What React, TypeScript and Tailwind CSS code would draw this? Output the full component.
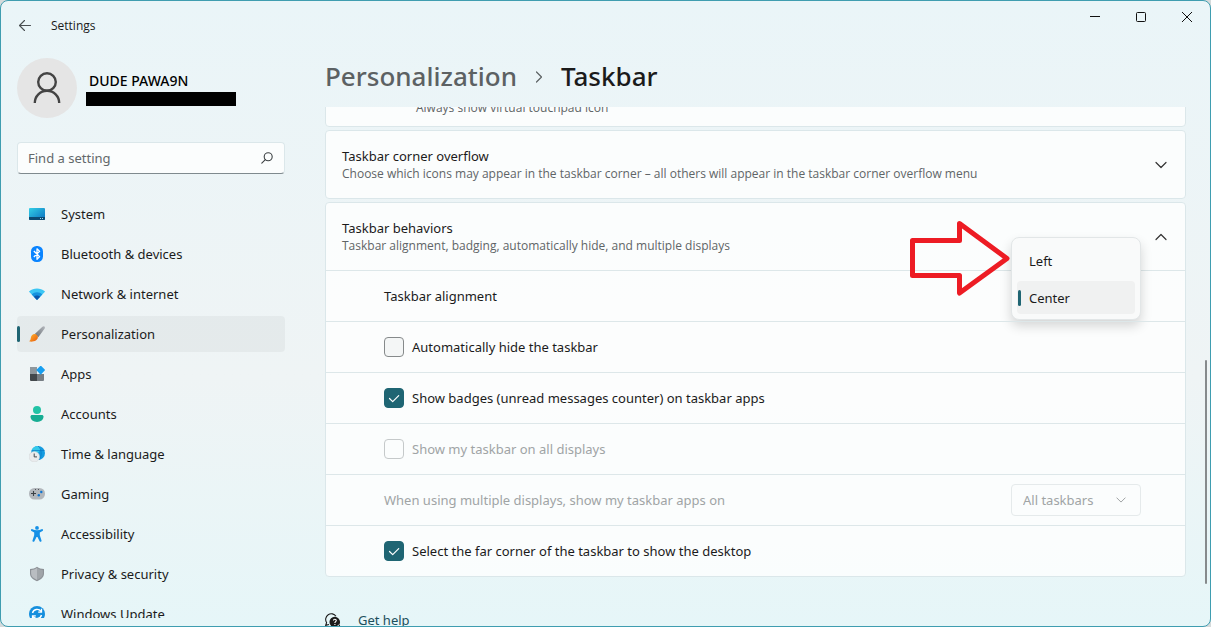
import React, { useState } from "react";

type IconProps = { className?: string };

const SystemIcon = () => (
  <svg viewBox="0 0 16 16" className="size-4">
    <defs>
      <linearGradient id="system" x1="0" y1="0" x2="1" y2="1">
        <stop offset="0" stopColor="#33cfe6" />
        <stop offset="1" stopColor="#0a6fc0" />
      </linearGradient>
    </defs>
    <rect x="0" y="2" width="16" height="12" rx="1" fill="url(#system)" />
    <path d="M0 11h16v2a1 1 0 0 1-1 1H1a1 1 0 0 1-1-1z" fill="#0c4a73" />
    <path d="M11 12h1v1h-1zM13 12h1v1h-1z" fill="#9adcf5" />
  </svg>
);

const BluetoothIcon = () => (
  <svg viewBox="0 0 16 16" className="size-4">
    <rect x="2" y="0" width="12" height="16" rx="5.500" fill="#0a84ff" />
    <path d="M4.800 5l5.800 5.600L8 13.200V2.800l2.600 2.600L4.800 11" fill="none" stroke="#fff" strokeWidth="1.300" strokeLinejoin="round" />
  </svg>
);

const NetworkIcon = () => (
  <svg viewBox="0 0 16 16" className="size-4">
    <path d="M8 14L.3 6.100a.6.6 0 0 1 0-.9C4.600 1.500 11.400 1.500 15.700 5.200a.6.6 0 0 1 0 .9z" fill="#3cc6f4" />
    <path d="M8 14L2.700 8.500C5.600 5.600 10.400 5.600 13.300 8.500z" fill="#1592de" />
    <path d="M8 14L4.900 10.800C6.600 9 9.400 9 11.100 10.800z" fill="#0b57ad" />
  </svg>
);

const BrushIcon = () => (
  <svg viewBox="0 0 16 16" className="size-4">
    <defs>
      <linearGradient id="handle" x1="1" y1="0" x2="0" y2="1">
        <stop offset="0" stopColor="#b4b8bd" />
        <stop offset="1" stopColor="#6a6f75" />
      </linearGradient>
      <linearGradient id="bristle" x1="0" y1="0" x2="1" y2="1">
        <stop offset="0" stopColor="#ffb52e" />
        <stop offset="1" stopColor="#e8590c" />
      </linearGradient>
    </defs>
    <path d="M15.400.4c.7.500.7 1.500.1 2.400L9.300 11.200 5.800 8 13.400.8c.6-.6 1.400-.8 2-.4z" fill="url(#handle)" />
    <path d="M5.600 8c1.800 0 3.400 1.500 3.300 3.300C8.700 14.400 5.200 16 .8 15.600c-.4 0-.5-.5-.2-.8 1-.8 1-1.700 1.300-3.300C2.300 9.300 3.800 8 5.600 8z" fill="url(#bristle)" />
  </svg>
);

const AppsIcon = () => (
  <svg viewBox="0 0 16 16" className="size-4">
    <path d="M1 1h7v7H1z" fill="#8f979d" />
    <path d="M1 8h7v7H2a1 1 0 0 1-1-1z" fill="#43484c" />
    <path d="M8 8h7v6a1 1 0 0 1-1 1H8z" fill="#777e84" />
    <rect x="8.500" y=".9" width="6.400" height="6.400" rx=".7" transform="rotate(45 11.700 4.100)" fill="#189ff0" />
  </svg>
);

const AccountsIcon = () => (
  <svg viewBox="0 0 16 16" className="size-4">
    <circle cx="8" cy="4" r="4" fill="#22c3a6" />
    <path d="M3.200 9h9.600c1 0 1.700.7 1.700 1.600C14.500 14 11.600 16 8 16s-6.500-2-6.500-5.400C1.500 9.700 2.200 9 3.200 9z" fill="#17ad93" />
  </svg>
);

const TimeIcon = () => (
  <svg viewBox="0 0 16 16" className="size-4">
    <circle cx="9" cy="7" r="7" fill="#149be0" />
    <path d="M9 0a7 7 0 0 0-6.600 4.700L9 7zM9 0l3 3-3 4z" fill="#35c9ea" />
    <path d="M9 0c4 3 4 10 1 14M3 4.500h12.500" stroke="#0878c4" strokeWidth=".7" fill="none" />
    <circle cx="5.300" cy="10.700" r="5.300" fill="#e9ebed" stroke="#c9cdd0" strokeWidth=".4" />
    <path d="M5.200 7.500v3.400H8" stroke="#444a4f" strokeWidth="1" fill="none" />
  </svg>
);

const GamingIcon = () => (
  <svg viewBox="0 0 16 16" className="size-4">
    <rect x="0" y="2" width="16" height="11.500" rx="5.500" fill="#b2b7bc" />
    <path d="M4.500 5v5M2 7.500h5" stroke="#3b4045" strokeWidth="1.100" />
    <path d="M6 3.500h1M9 3.500h1" stroke="#50565b" strokeWidth="1" />
    <circle cx="12.300" cy="6" r="1.200" fill="#0f75d0" />
    <circle cx="9.800" cy="9.200" r="1.200" fill="#0f75d0" />
  </svg>
);

const AccessibilityIcon = () => (
  <svg viewBox="0 0 16 16" className="size-4">
    <circle cx="8" cy="1.900" r="1.900" fill="#1590e6" />
    <path
      d="M2 3.700c.2-.6.800-.8 1.400-.500 2.900 1.500 6.300 1.500 9.200 0 .6-.3 1.200-.100 1.400.500.2.500 0 1-.500 1.300L10.800 6.600v2.600l1.700 5.300c.2.600-.1 1.100-.6 1.300-.6.2-1.100-.1-1.300-.6L8.500 11h-1l-2.100 4.200c-.2.500-.7.800-1.300.600-.5-.2-.8-.7-.6-1.300l1.700-5.300V6.600L2.500 5C2 4.700 1.800 4.200 2 3.700z"
      fill="#1590e6"
    />
  </svg>
);

const ShieldIcon = () => (
  <svg viewBox="0 0 16 16" className="size-4">
    <path d="M8 .8c2 1.500 4.300 2.200 7 2.300v4.500c0 3.600-2.700 6-7 7.600-4.300-1.600-7-4-7-7.600V3.100C3.700 3 6 2.300 8 .8z" fill="#8d9297" />
    <path d="M8 2.100v11.800c-3.800-1.500-5.900-3.400-5.900-6.300V4.200C4.300 4 6.300 3.300 8 2.100z" fill="#b9bdc1" />
    <path d="M8 2.100c1.700 1.200 3.700 1.900 5.900 2.100v3.400c0 2.900-2.100 4.800-5.900 6.300z" fill="#a0a5a9" />
  </svg>
);

const UpdateIcon = () => (
  <svg viewBox="0 0 16 16" className="size-4">
    <circle cx="8" cy="8" r="8" fill="#158fdd" />
    <path d="M3.500 7A4.700 4.700 0 0 1 12 5.500M12.500 9A4.700 4.700 0 0 1 4 10.500" stroke="#fff" strokeWidth="1.400" fill="none" />
    <path d="M12.500 2.800v3.400H9.200M3.500 13.200V9.800h3.300" stroke="#fff" strokeWidth="1.300" fill="none" />
  </svg>
);

const ChevronIcon = ({ className }: IconProps) => (
  <svg viewBox="0 0 12 12" className={className} fill="none" stroke="currentColor" strokeWidth="1.200" strokeLinecap="round" strokeLinejoin="round">
    <path d="M1 3.500l5 5 5-5" />
  </svg>
);

const GetHelpIcon = () => (
  <svg viewBox="0 0 16 16" className="size-4">
    <path d="M4 12.500l-3.300.900.900-2.900A5.300 5.300 0 1 1 11 4.300" fill="none" stroke="#1b1b1b" strokeWidth="1.100" />
    <path d="M9.800 4.800a5.300 5.300 0 1 1-.1 10.600 5.300 5.300 0 0 1 .1-10.600zM12 14l3.600 1.600L14.500 12z" fill="#1b1b1b" />
    <path d="M8.400 8.600c0-1.900 2.900-1.900 2.900 0 0 1.100-1.400 1.100-1.400 2.300M9.900 12v1" fill="none" stroke="#fff" strokeWidth="1.100" />
  </svg>
);

const navItems = [
  { label: "System", icon: SystemIcon },
  { label: "Bluetooth & devices", icon: BluetoothIcon },
  { label: "Network & internet", icon: NetworkIcon },
  { label: "Personalization", icon: BrushIcon },
  { label: "Apps", icon: AppsIcon },
  { label: "Accounts", icon: AccountsIcon },
  { label: "Time & language", icon: TimeIcon },
  { label: "Gaming", icon: GamingIcon },
  { label: "Accessibility", icon: AccessibilityIcon },
  { label: "Privacy & security", icon: ShieldIcon },
  { label: "Windows Update", icon: UpdateIcon },
];

const TitleBar = () => (
  <header className="flex h-[49px] shrink-0 items-start justify-between">
    <div className="flex h-full items-center gap-[18px] pl-4">
      <button aria-label="Back" className="text-[#4a4f52]">
        <svg viewBox="0 0 16 16" className="size-4" fill="none" stroke="currentColor" strokeWidth="1.100" strokeLinecap="round" strokeLinejoin="round">
          <path d="M13.500 7.500H2.500M7.500 2.500l-5 5 5 5" />
        </svg>
      </button>
      <span className="font-['Open_Sans',sans-serif] text-xs">Settings</span>
    </div>
    <div className="flex">
      <button aria-label="Minimize" className="flex h-8 w-[46px] items-center justify-center">
        <svg viewBox="0 0 10 10" className="size-[10px]" stroke="#111" fill="none">
          <path d="M0 4.500h10" />
        </svg>
      </button>
      <button aria-label="Maximize" className="flex h-8 w-[46px] items-center justify-center">
        <svg viewBox="0 0 10 10" className="size-[10px]" stroke="#111" fill="none">
          <rect x=".5" y=".5" width="9" height="9" rx="1" />
        </svg>
      </button>
      <button aria-label="Close" className="flex h-8 w-[46px] items-center justify-center">
        <svg viewBox="0 0 10 10" className="size-[10px]" stroke="#111" fill="none">
          <path d="M0 0l10 10M10 0L0 10" />
        </svg>
      </button>
    </div>
  </header>
);

const Sidebar = () => (
  <aside className="flex w-[284px] shrink-0 flex-col pt-2 pb-2 pl-4">
    <div className="flex items-center gap-[9px]">
      <div className="flex size-[60px] items-center justify-center rounded-full bg-[#e5e5e5]">
        <svg viewBox="0 0 28 32" className="h-8 w-7" fill="none" stroke="#444" strokeWidth="2.400">
          <circle cx="14" cy="10" r="8.800" />
          <path d="M1.800 31c0-7 5.400-12.200 12.200-12.200S26.200 24 26.200 31" />
        </svg>
      </div>
      <div>
        <p className="pl-[3px] text-sm font-medium text-black">DUDE PAWA9N</p>
        <div className="mt-px h-[14px] w-[150px] bg-black" />
      </div>
    </div>

    <div className="relative mt-6">
      <input
        type="text"
        aria-label="Find a setting"
        placeholder="Find a setting"
        className="block h-8 w-full rounded border border-[#dbe7ea] border-b-[#7f8a8e] bg-white/80 pr-9 pl-[10px] text-[13px] placeholder:text-[#62686b]"
      />
      <svg viewBox="0 0 12 12" className="absolute top-[10px] right-3 size-3" fill="none" stroke="#3c4143" strokeWidth="1.100" strokeLinecap="round">
        <circle cx="7.200" cy="4.800" r="4" />
        <path d="M4.300 7.700L.8 11.200" />
      </svg>
    </div>

    <nav className="mt-[22px] flex min-h-0 flex-1 flex-col gap-1 overflow-hidden">
      {navItems.map(({ label, icon: Icon }) => {
        const active = label === "Personalization";
        return (
          <a
            key={label}
            href="#"
            className={`relative flex h-9 shrink-0 items-center gap-4 rounded pl-3 text-[13px] leading-5 ${active ? "bg-black/4" : ""}`}
          >
            {active && <span className="absolute left-0 h-4 w-[3px] rounded-full bg-[#1f6573]" />}
            <Icon />
            {label}
          </a>
        );
      })}
    </nav>
  </aside>
);

const CardHeader = ({ title, description, open }: { title: string; description: string; open?: boolean }) => (
  <button className="flex h-[67px] w-full items-center justify-between pt-px pr-[18px] pl-4 text-left" aria-expanded={!!open}>
    <span>
      <span className="block text-[13px] leading-[18px]">{title}</span>
      <span className="block font-['Open_Sans',sans-serif] text-xs leading-[18px] text-[#5f6567]">{description}</span>
    </span>
    <ChevronIcon className={`size-3 text-[#333] ${open ? "rotate-180" : ""}`} />
  </button>
);

const Row = ({ children }: { children: React.ReactNode }) => (
  <div className="relative flex h-[51px] items-center justify-between border-t border-[#dde7e9] pr-11 pl-[58px] text-[13px] leading-5">
    {children}
  </div>
);

const CheckRow = ({ label, initial, disabled }: { label: string; initial?: boolean; disabled?: boolean }) => {
  const [checked, setChecked] = useState(!!initial);
  return (
    <Row>
      <label className={`flex items-center gap-2 ${disabled ? "text-[#a0a4a5]" : ""}`}>
        <span className="relative size-5">
          <input
            type="checkbox"
            checked={checked}
            disabled={disabled}
            onChange={(e) => setChecked(e.target.checked)}
            className="block size-5 appearance-none rounded border border-[#868a8b] bg-[#f4f6f6] checked:border-[#1f6573] checked:bg-[#1f6573] disabled:border-[#c5c9ca] disabled:bg-transparent"
          />
          {checked && (
            <svg viewBox="0 0 20 20" className="pointer-events-none absolute inset-0" fill="none" stroke="#fff" strokeWidth="1.200" strokeLinecap="round" strokeLinejoin="round">
              <path d="M5.500 10.500l3.200 3.200 6-6" />
            </svg>
          )}
        </span>
        {label}
      </label>
    </Row>
  );
};

const AlignmentMenu = () => {
  const [value, setValue] = useState("Center");
  return (
    <div className="absolute -top-[34px] right-11">
      <svg viewBox="0 0 102 78" className="absolute -top-[17px] right-full h-[78px] w-[102px] max-w-none" fill="none" stroke="#ed1c24" strokeWidth="5" strokeLinejoin="round">
        <path d="M3.500 20.500h47v-17l47.500 35-47.500 34.500V55.500h-47z" />
      </svg>
      <div
        role="listbox"
        aria-label="Taskbar alignment"
        className="flex w-[130px] flex-col gap-1 rounded-lg border border-[#e2e6e7] bg-[#f9fafa] px-[5px] pt-1.5 pb-[5px] shadow-[0_6px_12px_rgba(0,0,0,0.16)]"
      >
        {["Left", "Center"].map((option) => (
          <button
            key={option}
            role="option"
            aria-selected={value === option}
            onClick={() => setValue(option)}
            className={`relative flex h-[33px] items-center rounded pl-3 ${value === option ? "bg-[#f0f1f1]" : ""}`}
          >
            {value === option && <span className="absolute left-px h-4 w-[3px] rounded-full bg-[#1f6573]" />}
            {option}
          </button>
        ))}
      </div>
    </div>
  );
};

const App = () => {
  return (
    <div className="h-screen bg-[#d5dadb] font-['Noto_Sans','Open_Sans',sans-serif] text-[#1b1b1b]">
      <div className="flex h-full flex-col overflow-hidden rounded-lg border border-[#3f9db0] bg-linear-to-b from-[#eaf5f8] via-[#eff4f5] via-60% to-[#e6f6f8]">
        <TitleBar />
        <div className="flex min-h-0 flex-1">
          <Sidebar />

          <main className="relative flex min-w-0 flex-1 flex-col pr-6 pl-10">
            <h1 className="flex h-[57px] shrink-0 items-center gap-4 pb-1 text-[26px] font-medium">
              <a href="#" className="text-[#5c6163]">Personalization</a>
              <ChevronIcon className="size-3 -rotate-90 text-[#5c6163]" />
              <span>Taskbar</span>
            </h1>

            <div className="flex min-h-0 flex-1 flex-col gap-[3px] overflow-hidden">
              {/* Touchpad row, scrolled mostly out of view */}
              <section className="-mt-[49px] flex h-[69px] shrink-0 items-end rounded border border-[#dbe7ea] bg-white/80 pb-[9px] pl-[90px]">
                <p className="font-['Open_Sans',sans-serif] text-xs leading-[18px] text-[#5f6567]">Always show virtual touchpad icon</p>
              </section>

              <section className="shrink-0 rounded border border-[#dbe7ea] bg-white/80">
                <CardHeader
                  title="Taskbar corner overflow"
                  description="Choose which icons may appear in the taskbar corner – all others will appear in the taskbar corner overflow menu"
                />
              </section>

              <section className="shrink-0 rounded border border-[#dbe7ea] bg-white/80">
                <CardHeader
                  title="Taskbar behaviors"
                  description="Taskbar alignment, badging, automatically hide, and multiple displays"
                  open
                />
                <Row>
                  <span>Taskbar alignment</span>
                  <AlignmentMenu />
                </Row>
                <CheckRow label="Automatically hide the taskbar" />
                <CheckRow label="Show badges (unread messages counter) on taskbar apps" initial />
                <CheckRow label="Show my taskbar on all displays" disabled />
                <Row>
                  <label htmlFor="displays" className="text-[#a0a4a5]">When using multiple displays, show my taskbar apps on</label>
                  <div className="relative">
                    <select
                      id="displays"
                      disabled
                      className="block h-8 w-[130px] appearance-none rounded border border-[#e5eaeb] bg-transparent pl-[11px] text-[#a0a4a5] opacity-100"
                    >
                      <option>All taskbars</option>
                    </select>
                    <ChevronIcon className="pointer-events-none absolute top-[11px] right-[15px] size-[10px] text-[#a0a4a5]" />
                  </div>
                </Row>
                <CheckRow label="Select the far corner of the taskbar to show the desktop" initial />
              </section>

              <a href="#" className="mt-[30px] flex shrink-0 items-center gap-[17px] text-[13px] leading-5 text-[#1c4f5c]">
                <GetHelpIcon />
                Get help
              </a>
            </div>

            {/* Scrollbar thumb */}
            <div className="absolute right-[3px] bottom-[42px] h-56 w-[2px] rounded-full bg-[#868a8c]" />
          </main>
        </div>
      </div>
    </div>
  );
};

export default App;
